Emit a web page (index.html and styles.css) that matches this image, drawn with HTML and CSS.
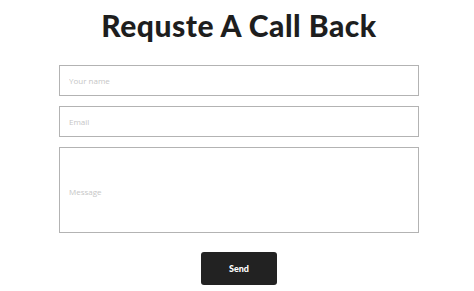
FILE: index.html
```html
<!DOCTYPE html>
<html>
<head>
<meta charset="utf-8">
<link rel="stylesheet" href="styles.css">
</head>
<body>
<div class="page">
  <h1 class="title">Requste A Call Back</h1>
  <form class="form">
    <input class="field" type="text" placeholder="Your name">
    <input class="field" type="text" placeholder="Email">
    <textarea class="field area" placeholder="Message"></textarea>
    <button class="send" type="button">Send</button>
  </form>
</div>
</body>
</html>
```
FILE: styles.css
```css
html, body {
  margin: 0;
  padding: 0;
  background: #fff;
}
.page {
  width: 474px;
  display: flex;
  flex-direction: column;
  align-items: center;
}
.title {
  margin: 7px 0 0 4px;
  font-family: "Lato", sans-serif;
  font-weight: 900;
  font-size: 30px;
  line-height: 36px;
  color: #1e1e1e;
  letter-spacing: 0.5px;
}
.form {
  margin: 22px 0 0 4px;
  width: 360px;
  display: flex;
  flex-direction: column;
  align-items: center;
  gap: 10px;
}
.field {
  box-sizing: border-box;
  width: 360px;
  height: 31px;
  margin: 0;
  border: 1px solid #b3b3b3;
  border-radius: 0;
  padding: 0 9px;
  font-family: "Open Sans", sans-serif;
  font-size: 8px;
  color: #333;
  background: #fff;
  outline: none;
}
.field::placeholder {
  color: #c6c6c6;
}
.area {
  height: 86px;
  resize: none;
  padding-top: 38px;
  line-height: 11px;
  display: block;
}
.send {
  margin-top: 9px;
  width: 76px;
  height: 33px;
  border: none;
  border-radius: 3px;
  background: #222222;
  color: #fff;
  font-family: "Lato", sans-serif;
  font-weight: 900;
  font-size: 9px;
  padding: 0;
}
```
